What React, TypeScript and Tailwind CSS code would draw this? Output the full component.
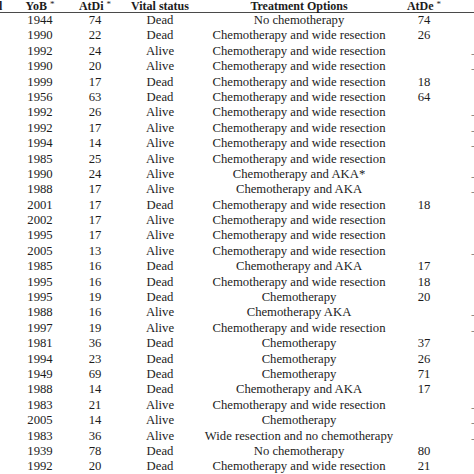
import React from "react";

type Row = [string, string, string, string, string, boolean];

const CWR = "Chemotherapy and wide resection";

const rows: Row[] = [
  ["1944", "74", "Dead", "No chemotherapy", "74", false],
  ["1990", "22", "Dead", CWR, "26", false],
  ["1992", "24", "Alive", CWR, "", true],
  ["1990", "20", "Alive", CWR, "", true],
  ["1999", "17", "Dead", CWR, "18", false],
  ["1956", "63", "Dead", CWR, "64", false],
  ["1992", "26", "Alive", CWR, "", true],
  ["1992", "17", "Alive", CWR, "", true],
  ["1994", "14", "Alive", CWR, "", true],
  ["1985", "25", "Alive", CWR, "", false],
  ["1990", "24", "Alive", "Chemotherapy and AKA*", "", true],
  ["1988", "17", "Alive", "Chemotherapy and AKA", "", true],
  ["2001", "17", "Dead", CWR, "18", false],
  ["2002", "17", "Alive", CWR, "", false],
  ["1995", "17", "Alive", CWR, "", false],
  ["2005", "13", "Alive", CWR, "", true],
  ["1985", "16", "Dead", "Chemotherapy and AKA", "17", false],
  ["1995", "16", "Dead", CWR, "18", false],
  ["1995", "19", "Dead", "Chemotherapy", "20", false],
  ["1988", "16", "Alive", "Chemotherapy AKA", "", true],
  ["1997", "19", "Alive", CWR, "", true],
  ["1981", "36", "Dead", "Chemotherapy", "37", false],
  ["1994", "23", "Dead", "Chemotherapy", "26", false],
  ["1949", "69", "Dead", "Chemotherapy", "71", false],
  ["1988", "14", "Dead", "Chemotherapy and AKA", "17", false],
  ["1983", "21", "Alive", CWR, "", true],
  ["2005", "14", "Alive", "Chemotherapy", "", true],
  ["1983", "36", "Alive", "Wide resection and no chemotherapy", "", true],
  ["1939", "78", "Dead", "No chemotherapy", "80", false],
  ["1992", "20", "Dead", CWR, "21", false],
];

const grid = "grid grid-cols-[14px_52px_58px_72px_206px_44px_28px]";

function Star() {
  return <span className="text-[9px] font-normal align-top leading-[9px] ml-[3px]">*</span>;
}

export default function App() {
  return (
    <div
      className="w-[474px] h-[474px] overflow-hidden bg-white text-[#1c1c1c]"
      style={{ fontFamily: '"Liberation Serif", "Times New Roman", serif' }}
    >
      <div className={`${grid} h-[13px] border-b border-[#4a4a4a] text-[12px] font-bold leading-[12px]`}>
        <div className="text-left ml-[-1px] whitespace-nowrap">l</div>
        <div className="text-center whitespace-nowrap">
          YoB<Star />
        </div>
        <div className="text-center whitespace-nowrap">
          AtDi<Star />
        </div>
        <div className="text-center whitespace-nowrap">Vital status</div>
        <div className="text-center whitespace-nowrap">Treatment Options</div>
        <div className="text-center whitespace-nowrap">
          AtDe<Star />
        </div>
        <div />
      </div>
      <div className="text-[12.7px]">
        {rows.map((r, i) => (
          <div key={i} className={`${grid} h-[15.4px] leading-[15.4px]`}>
            <div />
            <div className="text-center whitespace-nowrap">{r[0]}</div>
            <div className="text-center whitespace-nowrap">{r[1]}</div>
            <div className="text-center whitespace-nowrap">{r[2]}</div>
            <div className="text-center whitespace-nowrap">{r[3]}</div>
            <div className="text-center whitespace-nowrap">{r[4]}</div>
            <div className="pl-[25px] whitespace-nowrap text-[#8a8a8a]">
              {r[5] ? <span className="relative top-[2px]">-</span> : null}
            </div>
          </div>
        ))}
      </div>
    </div>
  );
}
